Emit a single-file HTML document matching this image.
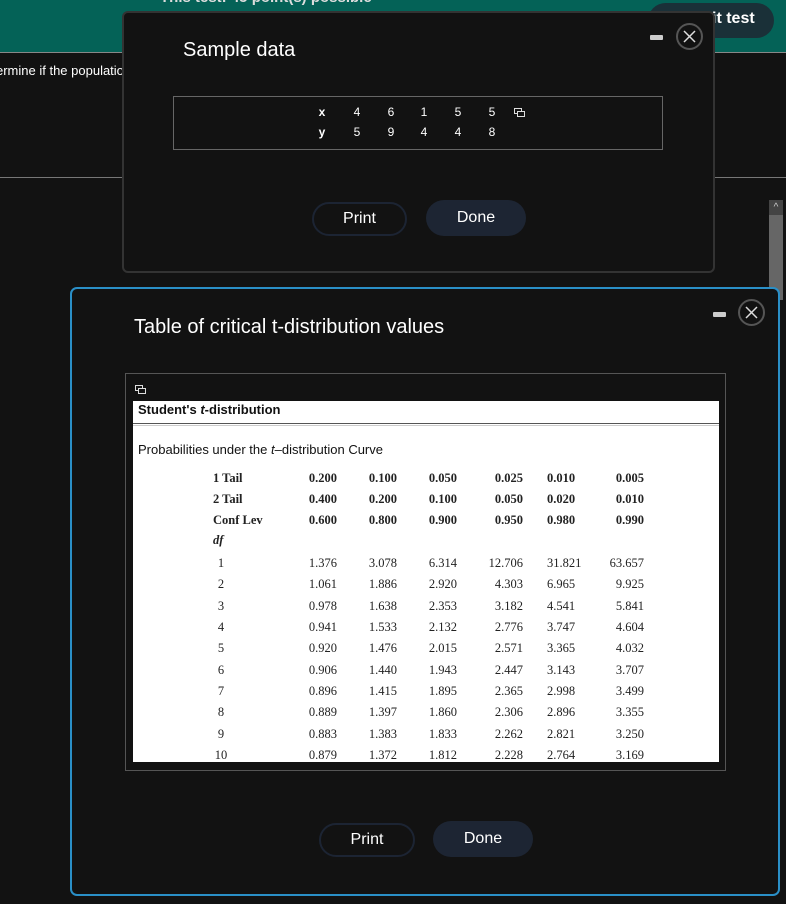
<!DOCTYPE html>
<html><head><meta charset="utf-8"><style>
*{margin:0;padding:0;box-sizing:border-box}
body{width:786px;height:904px;background:#121212;position:relative;overflow:hidden;font-family:"Liberation Sans",sans-serif;color:#fff}
.abs{position:absolute}
.t{position:absolute;font-family:"Liberation Serif",serif;font-size:12.5px;color:#222;line-height:14px;white-space:nowrap}
.b{font-weight:bold}
.btn{position:absolute;border-radius:18px;font-size:16px;text-align:center;line-height:34px;height:34px}
.x{position:absolute;width:27px;height:27px;border:2px solid #555;border-radius:50%}
.min{position:absolute;width:13px;height:5px;background:#ccc;border-radius:1px}
.d{position:absolute;font-size:12px;width:14px;text-align:center}
</style></head><body>
<div class="abs" style="left:0;top:0;width:786px;height:52px;background:#046257"></div>
<div class="abs" style="left:0;top:52px;width:786px;height:1px;background:#888"></div>
<div class="abs" style="left:160px;top:-11px;font-size:15px;font-weight:bold;color:#ddd">This test: 45 point(s) possible</div>
<div class="abs" style="left:648px;top:3px;width:126px;height:35px;border-radius:18px;background:#1a3038"></div>
<div class="abs" style="left:712px;top:10px;font-size:16px;font-weight:bold">it test</div>
<div class="abs" style="left:-4px;top:63px;font-size:13px">ermine if the population</div>
<div class="abs" style="left:0;top:177px;width:786px;height:1px;background:#777"></div>
<div class="abs" style="left:769px;top:200px;width:14px;height:100px;background:#666"></div>
<div class="abs" style="left:769px;top:200px;width:14px;height:15px;background:#444;color:#ccc;font-size:10px;text-align:center;line-height:15px">^</div>

<!-- modal 1 -->
<div class="abs" style="left:122px;top:11px;width:593px;height:262px;background:#121212;border:2px solid #333;border-radius:6px"></div>
<div class="abs" style="left:183px;top:39px;font-size:20px">Sample data</div>
<div class="min" style="left:650px;top:35px"></div>
<div class="x" style="left:676px;top:23px"><svg width="23" height="23" style="position:absolute;left:0;top:0"><path d="M6 6L17 17M17 6L6 17" stroke="#ddd" stroke-width="1.5"/></svg></div>
<div class="abs" style="left:173px;top:96px;width:490px;height:54px;border:1px solid #666"></div>
<div class="d" style="left:315px;top:105px;font-weight:bold">x</div>
<div class="d" style="left:315px;top:125px;font-weight:bold">y</div>
<div class="d" style="left:350px;top:105px">4</div><div class="d" style="left:384px;top:105px">6</div><div class="d" style="left:417px;top:105px">1</div><div class="d" style="left:451px;top:105px">5</div><div class="d" style="left:485px;top:105px">5</div>
<div class="d" style="left:350px;top:125px">5</div><div class="d" style="left:384px;top:125px">9</div><div class="d" style="left:417px;top:125px">4</div><div class="d" style="left:451px;top:125px">4</div><div class="d" style="left:485px;top:125px">8</div>
<svg class="abs" style="left:514px;top:108px" width="12" height="10"><rect x="0.5" y="0.5" width="7" height="5" fill="none" stroke="#ddd"/><rect x="3.5" y="3.5" width="7" height="5" fill="#121212" stroke="#ddd"/></svg>
<div class="btn" style="left:312px;top:202px;width:95px;border:2px solid #1c2433;line-height:30px">Print</div>
<div class="btn" style="left:426px;top:200px;width:100px;background:#1d2533;height:36px;line-height:36px">Done</div>

<!-- modal 2 -->
<div class="abs" style="left:70px;top:287px;width:710px;height:609px;background:#121212;border:2px solid #2a8fc7;border-radius:7px"></div>
<div class="abs" style="left:134px;top:316px;font-size:20px">Table of critical t-distribution values</div>
<div class="min" style="left:713px;top:312px"></div>
<div class="x" style="left:738px;top:299px"><svg width="23" height="23" style="position:absolute;left:0;top:0"><path d="M6 6L17 17M17 6L6 17" stroke="#ddd" stroke-width="1.5"/></svg></div>
<div class="abs" style="left:125px;top:373px;width:601px;height:398px;border:1px solid #555"></div>
<svg class="abs" style="left:135px;top:385px" width="12" height="10"><rect x="0.5" y="0.5" width="7" height="5" fill="none" stroke="#ddd"/><rect x="3.5" y="3.5" width="7" height="5" fill="#121212" stroke="#ddd"/></svg>
<div class="abs" style="left:133px;top:401px;width:586px;height:361px;background:#fff"></div>
<div class="abs" style="left:133px;top:423px;width:586px;height:1px;background:#555"></div>
<div class="abs" style="left:133px;top:425px;width:586px;height:1px;background:#ccc"></div>
<div class="abs" style="left:138px;top:402px;font-size:13px;font-weight:bold;color:#111">Student's <i>t</i>-distribution</div>
<div class="abs" style="left:138px;top:442px;font-size:13px;color:#111">Probabilities under the <i>t</i>–distribution Curve</div>
<div id="tbl"></div>
<script>
var rows=[["1 Tail","0.200","0.100","0.050","0.025","0.010","0.005"],["2 Tail","0.400","0.200","0.100","0.050","0.020","0.010"],["Conf Lev","0.600","0.800","0.900","0.950","0.980","0.990"]];
var data=[[1,"1.376","3.078","6.314","12.706","31.821","63.657"],[2,"1.061","1.886","2.920","4.303","6.965","9.925"],[3,"0.978","1.638","2.353","3.182","4.541","5.841"],[4,"0.941","1.533","2.132","2.776","3.747","4.604"],[5,"0.920","1.476","2.015","2.571","3.365","4.032"],[6,"0.906","1.440","1.943","2.447","3.143","3.707"],[7,"0.896","1.415","1.895","2.365","2.998","3.499"],[8,"0.889","1.397","1.860","2.306","2.896","3.355"],[9,"0.883","1.383","1.833","2.262","2.821","3.250"],[10,"0.879","1.372","1.812","2.228","2.764","3.169"]];
var R=[337,397,457,523,null,644];var h="";
function cells(r,y,b){for(var i=1;i<7;i++){if(i==5)h+='<div class="t'+b+'" style="left:547px;top:'+y+'px">'+r[i]+'</div>';else h+='<div class="t'+b+'" style="right:'+(786-R[i-1])+'px;top:'+y+'px">'+r[i]+'</div>';}}
rows.forEach(function(r,k){var y=471+k*21;h+='<div class="t b" style="left:213px;top:'+y+'px">'+r[0]+'</div>';cells(r,y," b");});
h+='<div class="t b" style="left:213px;top:533px;font-style:italic">df</div>';
data.forEach(function(r,k){var y=556+k*21.33;h+='<div class="t" style="left:206px;width:30px;text-align:center;top:'+y+'px">'+r[0]+'</div>';cells(r,y,"");});
document.getElementById("tbl").innerHTML=h;
</script>
<div class="btn" style="left:319px;top:823px;width:96px;border:2px solid #1c2433;line-height:30px">Print</div>
<div class="btn" style="left:433px;top:821px;width:100px;background:#1d2533;height:36px;line-height:36px">Done</div>
</body></html>
